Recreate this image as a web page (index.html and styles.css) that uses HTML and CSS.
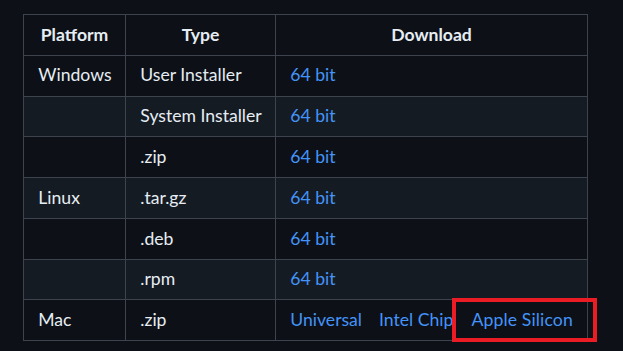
FILE: index.html
```html
<!DOCTYPE html>
<html>
<head>
<meta charset="utf-8">
<link rel="stylesheet" href="styles.css">
</head>
<body>
<div class="page">
  <div class="wrap">
    <table class="dl">
      <colgroup>
        <col class="c1"><col class="c2"><col class="c3">
      </colgroup>
      <thead>
        <tr><th>Platform</th><th>Type</th><th>Download</th></tr>
      </thead>
      <tbody>
        <tr><td>Windows</td><td>User Installer</td><td><a href="#">64 bit</a></td></tr>
        <tr class="alt"><td></td><td>System Installer</td><td><a href="#">64 bit</a></td></tr>
        <tr><td></td><td>.zip</td><td><a href="#">64 bit</a></td></tr>
        <tr class="alt"><td>Linux</td><td>.tar.gz</td><td><a href="#">64 bit</a></td></tr>
        <tr><td></td><td>.deb</td><td><a href="#">64 bit</a></td></tr>
        <tr class="alt"><td></td><td>.rpm</td><td><a href="#">64 bit</a></td></tr>
        <tr><td>Mac</td><td>.zip</td><td class="mac"><a href="#" class="l1">Universal</a><a href="#" class="l2">Intel Chip</a><a href="#" class="l3">Apple Silicon</a></td></tr>
      </tbody>
    </table>
    <div class="highlight"></div>
  </div>
</div>
</body>
</html>
```

FILE: styles.css
```css
html, body {
  margin: 0;
  padding: 0;
  background: #0d1117;
}
.page {
  width: 623px;
  height: 351px;
  box-sizing: border-box;
  padding: 14px 0 0 23px;
  font-family: "Lato", "Liberation Sans", sans-serif;
  color: #e6edf3;
}
.wrap {
  position: relative;
  width: 564px;
}
.dl {
  border-collapse: collapse;
  table-layout: fixed;
  width: 564px;
  font-size: 17.6px;
  line-height: 26.4px;
}
.c1 { width: 102px; }
.c2 { width: 150px; }
.c3 { width: 312px; }
.dl th, .dl td {
  border: 1px solid #3d444d;
  padding: 6.7px 14.3px;
  text-align: left;
  white-space: nowrap;
}
.dl th {
  font-weight: 700;
  text-align: center;
}
.dl tr.alt td {
  background: #151b23;
}
.dl a {
  color: #4493f8;
  text-decoration: none;
}
.mac a { display: inline-block; }
.l1 { margin-right: 17px; }
.l2 { margin-right: 18px; }
.l3 { letter-spacing: 0.15px; }
.highlight {
  position: absolute;
  left: 429px;
  top: 284px;
  width: 137px;
  height: 36px;
  border: 4px solid #ec1c24;
}
```
